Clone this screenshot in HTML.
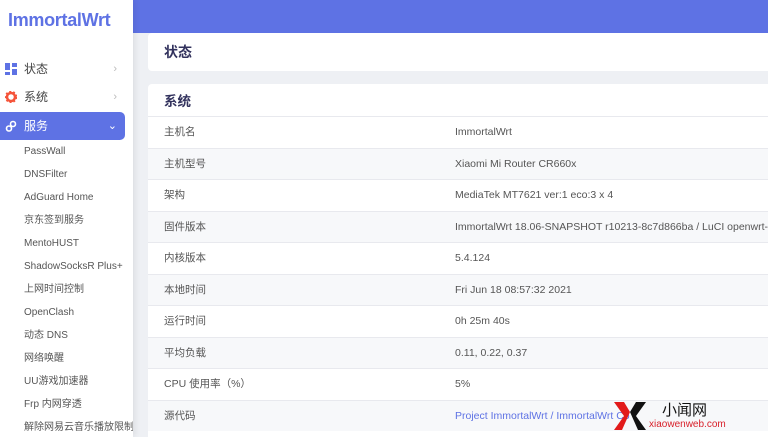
<!DOCTYPE html>
<html style="overflow:hidden;width:768px;height:437px"><head><meta charset="utf-8"><style>
*{margin:0;padding:0;box-sizing:border-box}
body{width:768px;height:437px;overflow:hidden;background:#eef0f4;font-family:"Liberation Sans","Noto Sans CJK SC",sans-serif;position:relative}
.top{position:absolute;left:133px;top:0;width:635px;height:33px;background:#5e72e4}
.side{position:absolute;left:0;top:0;width:133px;height:437px;background:#fff;box-shadow:2px 0 6px rgba(0,0,0,.08);z-index:2;overflow:hidden}
.logo{position:absolute;left:8px;top:10px;font-size:18px;font-weight:bold;color:#5e72e4;letter-spacing:-0.3px}
.m{position:absolute;left:0;width:125px;height:28px;font-size:12px;color:#444;line-height:28px;padding-left:24px}
.m .ar{position:absolute;right:8px;top:0;color:#bbb;font-size:11px}
.act{background:#5e72e4;color:#fff;border-radius:0 5px 5px 0}
.sub{position:absolute;left:24px;font-size:10px;color:#555;line-height:14px;height:14px;white-space:nowrap}
.c1{position:absolute;left:148px;top:33px;width:630px;height:38px;background:#fff;border-radius:4px}
.c1 b{position:absolute;left:16px;top:10px;font-size:14px;color:#32325d;line-height:18px}
.c2{position:absolute;left:148px;top:84px;width:630px;height:360px;background:#fff;border-radius:4px}
.c2 h3{position:absolute;left:16px;top:9px;font-size:13.5px;color:#32325d;line-height:18px}
.r{position:absolute;left:0;width:630px;height:31.5px;border-top:1px solid #e8e9ee;font-size:10.5px;color:#555;line-height:30px}
.r.g{background:#f7f8fa}
.r span{position:absolute;left:16px}
.r i{font-style:normal;position:absolute;left:307px;white-space:nowrap}
</style></head><body>
<div class="top"></div>
<div class="side">
<div class="logo">ImmortalWrt</div>
<div class="m" style="top:55px"><svg style="position:absolute;left:5px;top:8px" width="12" height="12"><rect x="0" y="0" width="5" height="7" fill="#5e72e4"/><rect x="7" y="0" width="5" height="4" fill="#5e72e4"/><rect x="0" y="9" width="5" height="3" fill="#5e72e4"/><rect x="7" y="6" width="5" height="6" fill="#5e72e4"/></svg>状态<span class="ar">›</span></div>
<div class="m" style="top:83px"><svg style="position:absolute;left:5px;top:8px" width="12" height="12"><circle cx="6" cy="6" r="4" fill="none" stroke="#f5543a" stroke-width="2.5"/><circle cx="6" cy="6" r="5.5" fill="none" stroke="#f5543a" stroke-width="1.5" stroke-dasharray="2 2"/></svg>系统<span class="ar">›</span></div>
<div class="m act" style="top:112px"><svg style="position:absolute;left:5px;top:8px" width="12" height="12"><circle cx="8" cy="4" r="2.5" fill="none" stroke="#fff" stroke-width="1.6"/><circle cx="4" cy="8.5" r="2.5" fill="none" stroke="#fff" stroke-width="1.6"/></svg>服务<span class="ar" style="color:#fff">⌄</span></div>
<div class="sub" style="top:145px">PassWall</div>
<div class="sub" style="top:168px">DNSFilter</div>
<div class="sub" style="top:191px">AdGuard Home</div>
<div class="sub" style="top:214px">京东签到服务</div>
<div class="sub" style="top:237px">MentoHUST</div>
<div class="sub" style="top:260px">ShadowSocksR Plus+</div>
<div class="sub" style="top:283px">上网时间控制</div>
<div class="sub" style="top:306px">OpenClash</div>
<div class="sub" style="top:329px">动态 DNS</div>
<div class="sub" style="top:352px">网络唤醒</div>
<div class="sub" style="top:375px">UU游戏加速器</div>
<div class="sub" style="top:398px">Frp 内网穿透</div>
<div class="sub" style="top:421px">解除网易云音乐播放限制</div>
</div>
<div class="c1"><b>状态</b></div>
<div class="c2"><h3>系统</h3>
<div class="r" style="top:32px"><span>主机名</span><i>ImmortalWrt</i></div>
<div class="r g" style="top:63.5px"><span>主机型号</span><i>Xiaomi Mi Router CR660x</i></div>
<div class="r" style="top:95px"><span>架构</span><i>MediaTek MT7621 ver:1 eco:3 x 4</i></div>
<div class="r g" style="top:126.5px"><span>固件版本</span><i>ImmortalWrt 18.06-SNAPSHOT r10213-8c7d866ba / LuCI openwrt-18.06-k</i></div>
<div class="r" style="top:158px"><span>内核版本</span><i>5.4.124</i></div>
<div class="r g" style="top:189.5px"><span>本地时间</span><i>Fri Jun 18 08:57:32 2021</i></div>
<div class="r" style="top:221px"><span>运行时间</span><i>0h 25m 40s</i></div>
<div class="r g" style="top:252.5px"><span>平均负载</span><i>0.11, 0.22, 0.37</i></div>
<div class="r" style="top:284px"><span>CPU 使用率（%）</span><i>5%</i></div>
<div class="r g" style="top:315.5px"><span>源代码</span><i style="color:#5e72e4">Project ImmortalWrt / ImmortalWrt Co</i></div>
</div>
<svg style="position:absolute;left:614px;top:402px" width="32" height="28"><polygon points="0,0 10,0 16,10 8,28 0,28 10,14" fill="#e21a1a"/><polygon points="32,0 22,0 16,10 24,28 32,28 22,14" fill="#111"/></svg>
<div style="position:absolute;left:662px;top:402px;font-size:15px;line-height:18px;color:#111">小闻网</div>
<div style="position:absolute;left:649px;top:419px;font-size:10px;line-height:12px;color:#d8202a">xiaowenweb.com</div>
</body></html>
